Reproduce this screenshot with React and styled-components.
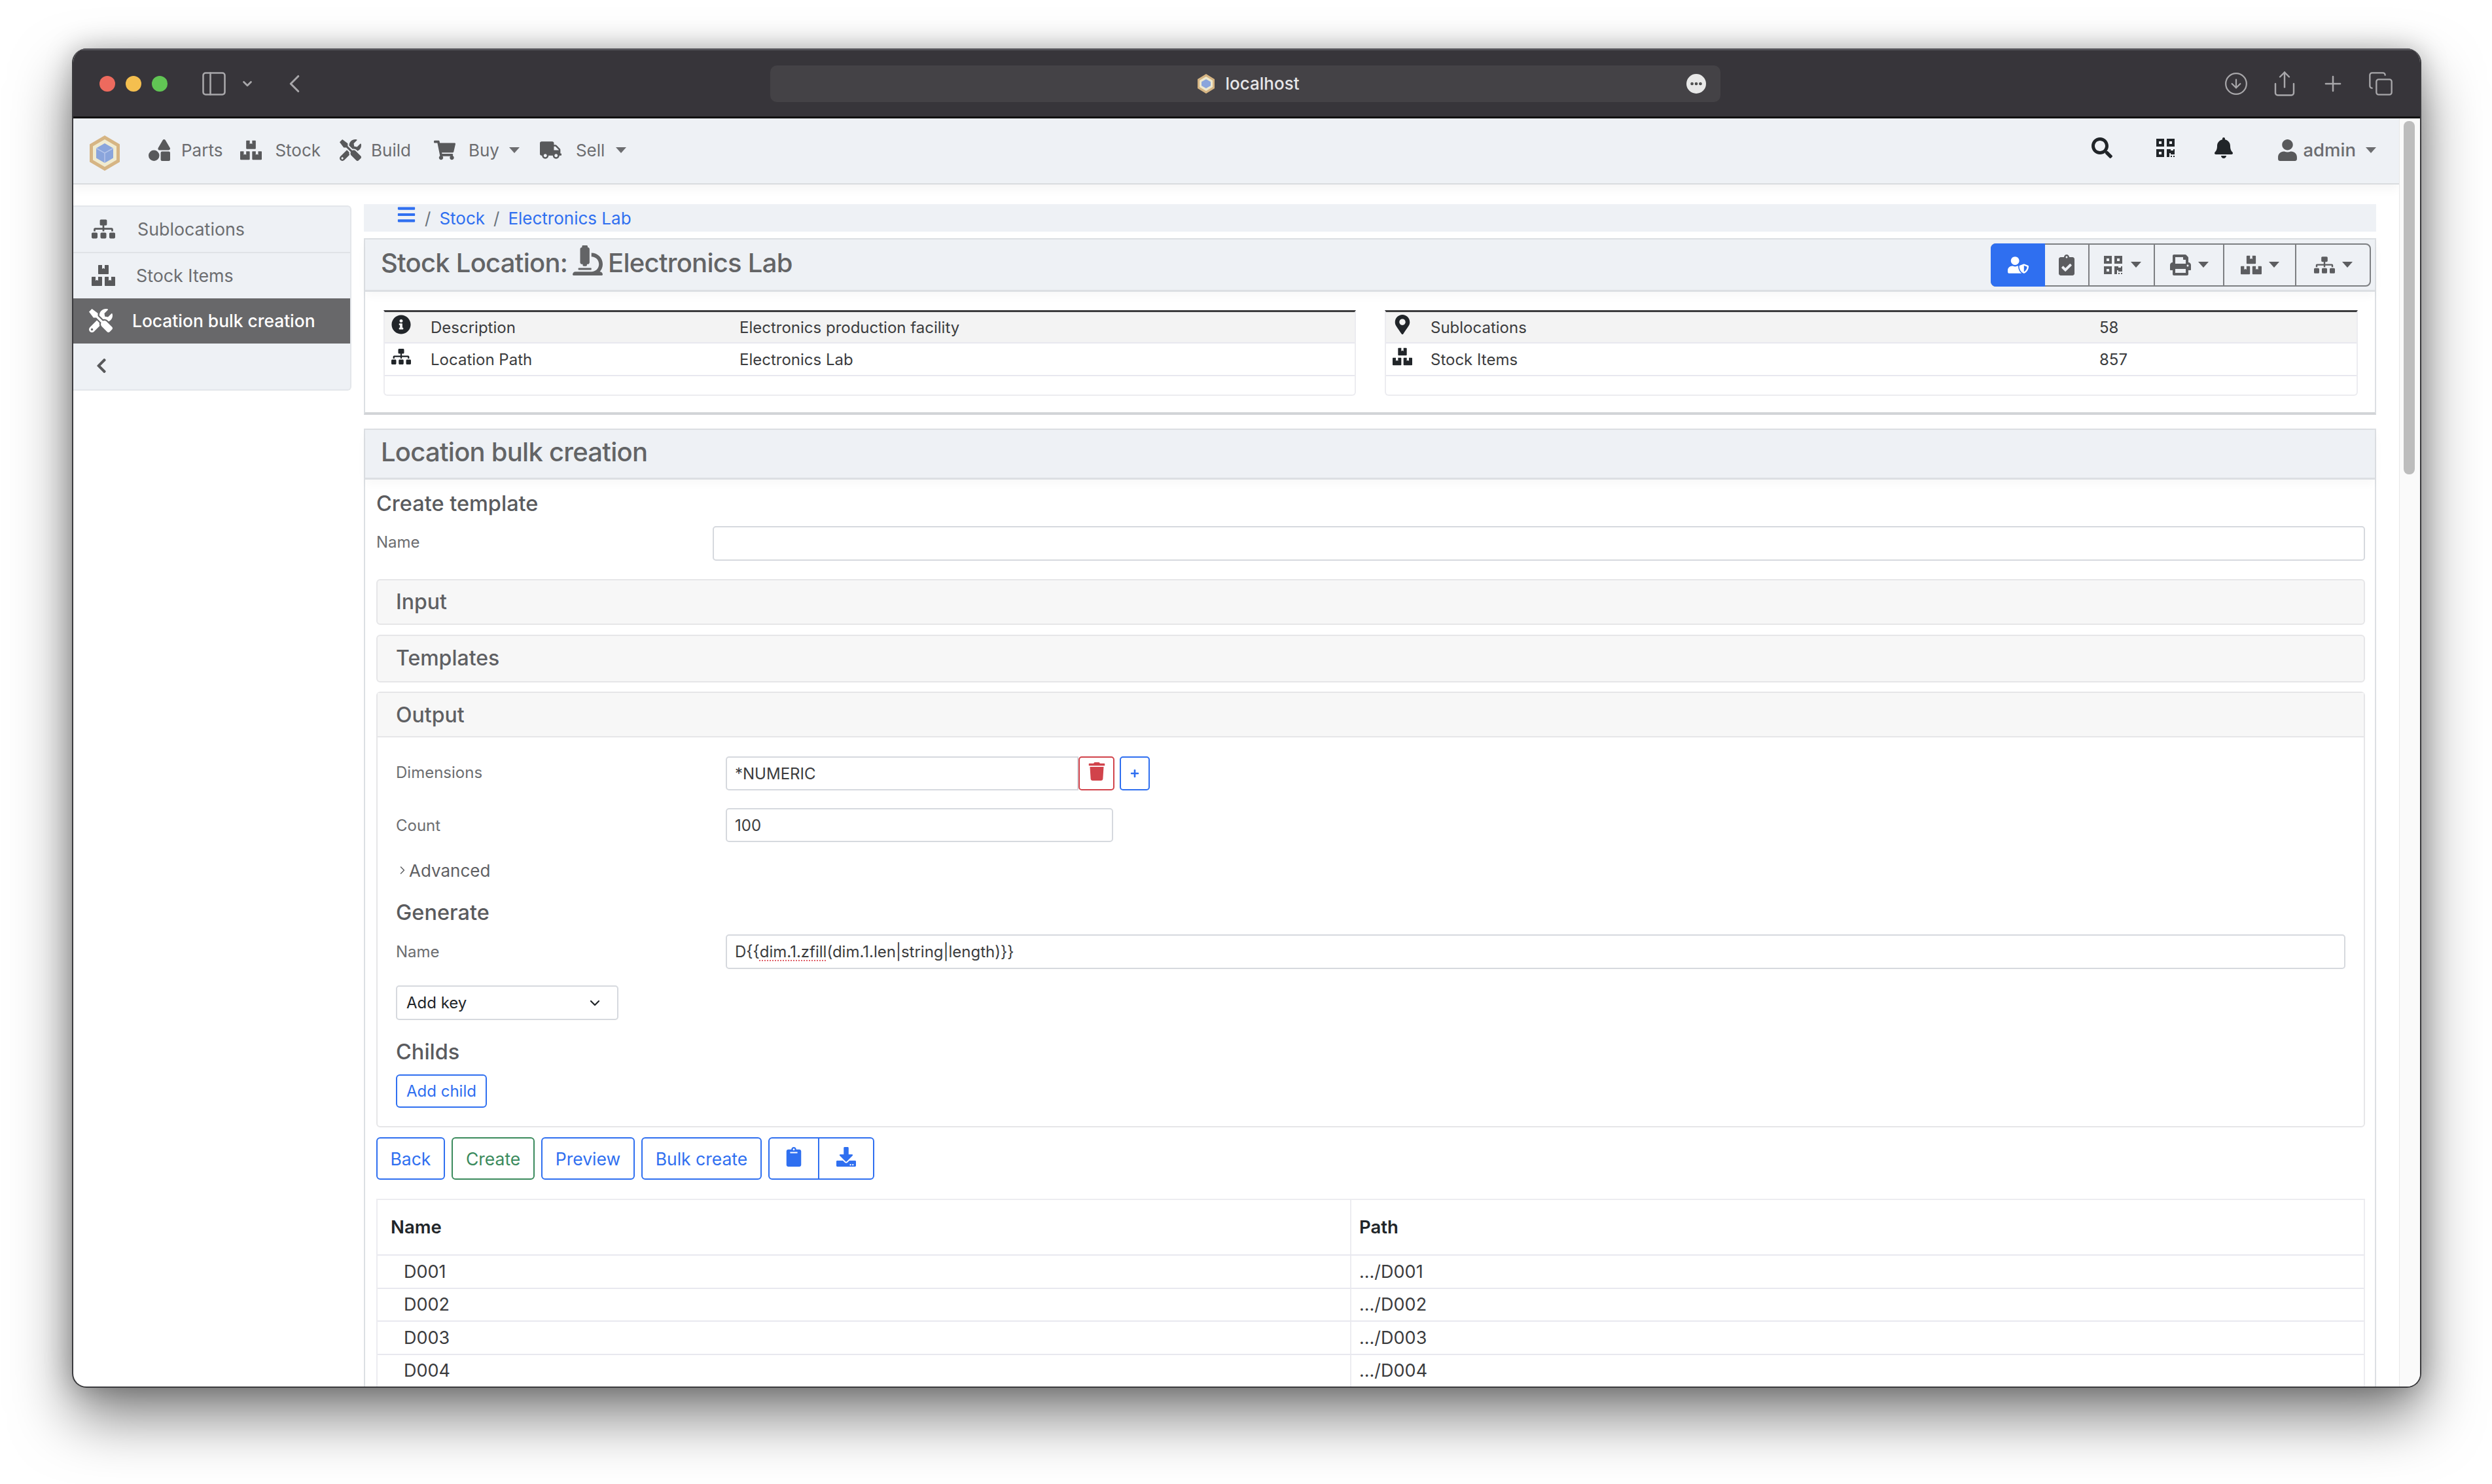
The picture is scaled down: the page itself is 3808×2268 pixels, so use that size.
import React from 'react';
import styled, { createGlobalStyle } from 'styled-components';
import {
  FaShapes, FaBoxes, FaTools, FaShoppingCart, FaTruck, FaSitemap, FaSearch, FaQrcode, FaBell, FaUser,
  FaUserShield, FaClipboardCheck, FaPrint, FaInfoCircle, FaMicroscope, FaBars, FaTrash, FaPlus,
  FaChevronLeft, FaClipboard, FaDownload, FaMapMarkerAlt,
} from 'react-icons/fa';
import { PanelLeft, ChevronDown, ChevronLeft, CircleArrowDown, Share, Plus, Copy, Ellipsis } from 'lucide-react';

const GlobalStyle = createGlobalStyle`
  html, body {
    margin: 0;
    padding: 0;
    background: #fff;
  }
  body {
    width: 3808px;
    height: 2268px;
    overflow: hidden;
    font-family: Inter, "Liberation Sans", sans-serif;
    color: #212529;
  }
  * { box-sizing: border-box; }
`;

const Desktop = styled.div`
  padding: 74px 108px 0 110px;
`;

const Window = styled.div`
  height: 2047px;
  border-radius: 22px;
  overflow: hidden;
  background: #fff;
  border: 2px solid #3a3a3d;
  border-width: 0 2px 2px 2px;
  box-shadow: 0 44px 90px rgba(0, 0, 0, 0.5), 0 0 40px rgba(0, 0, 0, 0.25);
  display: flex;
  flex-direction: column;
`;

const TitleBar = styled.div`
  height: 107px;
  flex: none;
  background: #37353a;
  border-top: 3px solid #55545a;
  border-bottom: 3px solid #111;
  display: flex;
  align-items: center;
  padding: 0 40px 0 40px;
  color: #a8a7aa;
`;

const Light = styled.span`
  width: 24px;
  height: 24px;
  border-radius: 50%;
  background: ${(p) => p.$color};
  margin-right: 16px;
  flex: none;
`;

const LeftTools = styled.div`
  display: flex;
  align-items: center;
  width: 1025px;
  flex: none;
`;

const SidebarToggle = styled(PanelLeft)`
  margin-left: 33px;
`;

const ChevronSmall = styled(ChevronDown)`
  margin: 0 38px 0 18px;
`;

const UrlBar = styled.div`
  width: 1452px;
  height: 56px;
  flex: none;
  background: #444246;
  border-radius: 10px;
  display: flex;
  align-items: center;
  justify-content: center;
  position: relative;
  color: #e6e6e8;
  font-size: 26px;
  gap: 16px;
  font-weight: 500;
  padding-left: 10px;
`;

const UrlMenu = styled.span`
  position: absolute;
  right: 22px;
  top: 13px;
  width: 30px;
  height: 30px;
  border-radius: 50%;
  background: #e8e8e8;
  color: #444;
  display: flex;
  align-items: center;
  justify-content: center;
`;

const RightTools = styled.div`
  margin-left: auto;
  display: flex;
  align-items: center;
  gap: 34px;
`;

const Viewport = styled.div`
  flex: 1;
  min-height: 0;
  display: flex;
`;

const PageArea = styled.div`
  flex: 1;
  min-width: 0;
  overflow: hidden;
`;

const ScrollTrack = styled.div`
  width: 32px;
  flex: none;
  background: #fafafa;
  border-left: 1px solid #e8e8e8;
  padding: 4px 8px 0 6px;
`;

const ScrollThumb = styled.div`
  height: 540px;
  border-radius: 8px;
  background: #bdbdbd;
`;

const Navbar = styled.div`
  height: 101px;
  background: #eef1f5;
  border-bottom: 2px solid #d9dcdf;
  display: flex;
  align-items: center;
  padding: 0 35px 3px 25px;
  box-shadow: 0 8px 14px rgba(0, 0, 0, 0.04);
`;

const Logo = styled.svg`
  width: 46px;
  height: 54px;
  margin: 10px 44px 0 0;
  flex: none;
`;

const NavItem = styled.div`
  display: flex;
  align-items: center;
  font-size: 26px;
  color: #6c6d70;
  margin-right: ${(p) => p.$mr || 27}px;
  gap: ${(p) => p.$gap || 18}px;
  svg { font-size: 33px; color: #58595b; }
`;

const AdminItem = styled(NavItem)`
  margin-right: 0;
  gap: 7px;
  font-size: 27.5px;
  font-weight: 500;
`;

const Caret = styled.span`
  width: 0;
  height: 0;
  margin-left: ${(p) => p.$gap || 0}px;
  border-left: 8px solid transparent;
  border-right: 8px solid transparent;
  border-top: 9px solid ${(p) => p.$color || '#6c6d70'};
  flex: none;
`;

const NavRight = styled.div`
  margin-left: auto;
  display: flex;
  align-items: center;
  color: #212529;
`;

const NavIcon = styled.span`
  display: flex;
  font-size: 32px;
  margin-right: ${(p) => p.$mr}px;
  margin-top: -6px;
`;

const Columns = styled.div`
  display: flex;
  padding: 30px 35px 0 0;
  gap: 19px;
`;

const Sidebar = styled.div`
  width: 425px;
  height: 283px;
  margin-top: 2px;
  flex: none;
  background: #eef1f5;
  border: 2px solid #e3e6ea;
  border-left: 0;
  border-radius: 0 6px 6px 0;
`;

const SideRow = styled.div`
  height: ${(p) => p.$h || 69}px;
  display: flex;
  align-items: center;
  font-size: ${(p) => (p.$active ? 26.4 : 26.8)}px;
  font-weight: ${(p) => (p.$active ? 500 : 400)};
  padding: 0 0 2px ${(p) => p.$pad || 24}px;
  color: ${(p) => (p.$active ? '#fff' : '#6c6d70')};
  background: ${(p) => (p.$active ? '#68686a' : 'transparent')};
  border-bottom: ${(p) => (p.$line ? '2px solid #dfe2e6' : '0')};
  svg {
    font-size: 36px;
    color: ${(p) => (p.$active ? '#fff' : '#58595b')};
    margin-right: ${(p) => p.$gap || 32}px;
  }
`;

const CollapseIcon = styled(FaChevronLeft)`
  && { font-size: 26px; }
  margin-left: 6px;
`;

const Main = styled.div`
  flex: 1;
  min-width: 0;
  display: flex;
  flex-direction: column;
`;

const Breadcrumb = styled.div`
  height: 42px;
  background: #eef1f5;
  display: flex;
  align-items: center;
  padding-left: 50px;
  font-size: 26px;
  gap: 13px;
  color: #6c757d;
  svg { font-size: 30px; margin-top: -6px; }
`;

const Crumb = styled.span`
  color: #2f6ff0;
`;

const Panel = styled.div`
  margin-top: ${(p) => p.$top}px;
  border: 2px solid #dcdfe3;
  border-bottom: 4px solid #d2d4d7;
  background: #fff;
  width: 100%;
`;

const PanelHead = styled.div`
  height: ${(p) => p.$h}px;
  display: flex;
  align-items: center;
  justify-content: space-between;
  padding: 0 6px 6px 24px;
  background: #eef1f5;
  border-bottom: 3px solid #dcdfe3;
  font-size: 40px;
  font-weight: 500;
  letter-spacing: -0.75px;
  color: #636466;
  box-shadow: 0 6px 14px rgba(0, 0, 0, 0.03);
`;

const TitleLeft = styled.div`
  display: flex;
  align-items: center;
  gap: 8px;
  svg { font-size: 46px; margin-top: -8px; color: #636466; }
`;

const ToolGroup = styled.div`
  display: flex;
  height: 66px;
  margin-bottom: -6px;
  border: 2px solid #7d7f82;
  border-radius: 8px;
  position: relative;
`;

const ToolButton = styled.div`
  display: flex;
  align-items: center;
  justify-content: center;
  gap: 11px;
  width: ${(p) => p.$w}px;
  margin: ${(p) => (p.$primary ? '-2px 0 -2px -2px' : '0')};
  background: ${(p) => (p.$primary ? '#2f6ff0' : 'transparent')};
  border-radius: ${(p) => (p.$primary ? '8px 0 0 8px' : '0')};
  border-right: ${(p) => (p.$last || p.$primary ? '0' : '2px solid #7d7f82')};
  color: ${(p) => (p.$primary ? '#fff' : '#5c5d60')};
  svg { font-size: 32px; }
`;

const InfoBody = styled.div`
  display: grid;
  grid-template-columns: 1486px 1487px;
  column-gap: 44px;
  padding: 28px 0 25px 28px;
`;

const InfoTable = styled.div`
  border: 2px solid #ececf0;
  border-top: 3px solid #3c3c3e;
  border-radius: 0 0 6px 6px;
  height: 131px;
  font-size: 24px;
  color: #3b3c3e;
`;

const InfoRow = styled.div`
  height: ${(p) => (p.$shade ? 48 : 50)}px;
  display: flex;
  align-items: center;
  border-bottom: 2px solid #e8e8ef;
  background: ${(p) => (p.$shade ? '#f3f3f3' : '#fff')};
  padding-left: 10px;
  svg { font-size: 30px; color: #212529; margin-top: -8px; flex: none; }
`;

const IconSlot = styled.span`
  width: ${(p) => p.$w || 60}px;
  flex: none;
  display: flex;
`;

const InfoLabel = styled.span`
  width: ${(p) => p.$w}px;
  flex: none;
`;

const PanelBody = styled.div`
  padding: 17px 15px 0 17px;
`;

const Section = styled.div`
  font-size: 32.5px;
  line-height: 40px;
  font-weight: 500;
  color: #5a5b5e;
  margin-top: ${(p) => p.$mt || 0}px;
  margin-bottom: ${(p) => p.$mb || 0}px;
`;

const FieldRow = styled.div`
  display: flex;
  align-items: center;
  margin-bottom: ${(p) => p.$mb || 0}px;
`;

const FieldLabel = styled.label`
  width: ${(p) => p.$w}px;
  flex: none;
  font-size: 24px;
  color: #6c6d70;
  margin-top: ${(p) => p.$up || 0}px;
`;

const TextBox = styled.div`
  flex: ${(p) => (p.$w ? 'none' : 1)};
  width: ${(p) => (p.$w ? `${p.$w}px` : 'auto')};
  height: ${(p) => p.$h || 52}px;
  border: 2px solid #d6d9de;
  border-radius: ${(p) => (p.$joined ? '5px 0 0 5px' : '5px')};
  background: #fff;
  display: flex;
  align-items: center;
  padding-left: 12px;
  font-size: 24px;
  color: #3b3c3e;
`;

const Misspelled = styled.span`
  text-decoration: underline dotted #e0616a 2px;
  text-underline-offset: 4px;
`;

const AccHead = styled.div`
  height: ${(p) => p.$h}px;
  background: #f7f7f7;
  border: 2px solid #e6e6e8;
  border-radius: 6px;
  margin-bottom: ${(p) => p.$mb}px;
  display: flex;
  align-items: center;
  padding: 0 0 2px 28px;
  font-size: 32px;
  font-weight: 500;
  color: #5f6063;
`;

const OutputCard = styled.div`
  border: 2px solid #e6e6e8;
  border-radius: 6px;
  height: 666px;
`;

const OutputHead = styled.div`
  height: 68px;
  background: #f7f7f7;
  border-bottom: 2px solid #e6e6e8;
  display: flex;
  align-items: center;
  padding-left: 28px;
  font-size: 32px;
  font-weight: 500;
  color: #5f6063;
`;

const OutputBody = styled.div`
  padding: 29px 28px 0 28px;
`;

const SquareButton = styled.div`
  height: 52px;
  width: ${(p) => p.$w}px;
  margin-left: ${(p) => p.$ml || 0}px;
  flex: none;
  border: 2px solid ${(p) => p.$color};
  border-radius: 5px;
  color: ${(p) => p.$color};
  display: flex;
  align-items: center;
  justify-content: center;
  svg { font-size: ${(p) => p.$icon}px; margin-top: ${(p) => p.$lift || 0}px; }
`;

const AdvancedRow = styled.div`
  display: flex;
  align-items: center;
  margin-top: 25px;
  height: 36px;
  font-size: 26px;
  color: #5f6063;
`;

const AdvancedArrow = styled(ChevronLeft)`
  transform: rotate(180deg);
`;

const Select = styled.div`
  width: 340px;
  height: 53px;
  margin: 25px 0 29px 0;
  border: 2px solid #d6d9de;
  border-radius: 5px;
  display: flex;
  align-items: center;
  justify-content: space-between;
  padding: 0 22px 0 14px;
  font-size: 24px;
  color: #212529;
`;

const OutlineButton = styled.div`
  height: ${(p) => p.$h || 65}px;
  padding: 0 ${(p) => p.$pad || 19.5}px;
  display: inline-flex;
  align-items: center;
  justify-content: center;
  border: 2px solid ${(p) => p.$color || '#2f6ff0'};
  border-radius: 6px;
  color: ${(p) => p.$color || '#2f6ff0'};
  font-size: ${(p) => p.$size || 26.5}px;
`;

const ButtonRow = styled.div`
  display: flex;
  gap: 10.5px;
  margin: 15px 0 29px 0;
`;

const IconGroup = styled.div`
  display: flex;
  height: 65px;
  border: 2px solid #2f6ff0;
  border-radius: 6px;
  color: #2f6ff0;
`;

const IconCell = styled.div`
  width: ${(p) => p.$w}px;
  display: flex;
  align-items: center;
  justify-content: center;
  border-right: ${(p) => (p.$line ? '2px solid #2f6ff0' : '0')};
  svg { font-size: 30px; margin-top: -6px; }
`;

const ResultTable = styled.div`
  border: 2px solid #ececf0;
`;

const ResultRow = styled.div`
  display: grid;
  grid-template-columns: 1486px 1fr;
  height: ${(p) => p.$h || 50.5}px;
  border-bottom: 2px solid #e8e8ef;
  align-items: center;
  font-size: ${(p) => (p.$head ? 27.5 : 27)}px;
  font-weight: ${(p) => (p.$head ? 600 : 400)};
  color: ${(p) => (p.$head ? '#212529' : '#3b3c3e')};
`;

const ResultCell = styled.div`
  height: 100%;
  display: flex;
  align-items: center;
  padding: 0 0 ${(p) => (p.$lift ? 2 : 0)}px ${(p) => p.$pad}px;
  border-left: ${(p) => (p.$split ? '2px solid #ececf0' : '0')};
`;

const rows = ['D001', 'D002', 'D003', 'D004'];

const App = () => (
  <>
    <GlobalStyle />
    <Desktop>
      <Window>
        <TitleBar>
          <LeftTools>
            <Light $color="#ed6a5e" />
            <Light $color="#f4bf4f" />
            <Light $color="#61c554" />
            <SidebarToggle size={44} strokeWidth={1.4} />
            <ChevronSmall size={22} strokeWidth={3} />
            <ChevronLeft size={46} strokeWidth={1.6} />
          </LeftTools>
          <UrlBar>
            <svg width="26" height="30" viewBox="0 0 26 30">
              <path d="M13 0 26 8v14l-13 8-13-8V8z" fill="#d6b584" />
              <path d="M13 4 23 10v10l-10 6-10-6V10z" fill="#eee8cc" />
              <path d="M13 8 20 12v6l-7 4-7-4v-6z" fill="#8aa5dc" />
            </svg>
            localhost
            <UrlMenu>
              <Ellipsis size={22} strokeWidth={3} />
            </UrlMenu>
          </UrlBar>
          <RightTools>
            <CircleArrowDown size={38} strokeWidth={1.4} />
            <Share size={42} strokeWidth={1.4} />
            <Plus size={38} strokeWidth={1.6} />
            <Copy size={40} strokeWidth={1.4} />
          </RightTools>
        </TitleBar>
        <Viewport>
          <PageArea>
            <Navbar>
              <Logo viewBox="0 0 46 54">
                <path d="M23 0 46 13.500v27L23 54 0 40.500v-27z" fill="#d6b584" />
                <path d="M23 6 41 16.500v21L23 48 5 37.500v-21z" fill="#f0ebd0" />
                <path d="M23 12 36 19.500v15L23 42 10 34.500v-15z" fill="#8aa5dc" />
                <path d="M10 19.500 23 27l13-7.500M23 27v15" stroke="#b4c5ea" strokeWidth="1.500" fill="none" />
              </Logo>
              <NavItem $gap={17}><FaShapes />Parts</NavItem>
              <NavItem $gap={20} $mr={29}><FaBoxes />Stock</NavItem>
              <NavItem $gap={15} $mr={35}><FaTools />Build</NavItem>
              <NavItem $mr={31} $gap={20}><FaShoppingCart />Buy<Caret $gap={-5} /></NavItem>
              <NavItem $gap={22}><FaTruck />Sell<Caret $gap={-5} /></NavItem>
              <NavRight>
                <NavIcon $mr={65}><FaSearch /></NavIcon>
                <NavIcon $mr={57}><FaQrcode /></NavIcon>
                <NavIcon $mr={65}><FaBell /></NavIcon>
                <AdminItem><FaUser />admin<Caret $gap={8} /></AdminItem>
              </NavRight>
            </Navbar>
            <Columns>
              <Sidebar>
                <SideRow $h={71} $line $gap={34} $pad={28}><FaSitemap />Sublocations</SideRow>
                <SideRow $h={69} $gap={32} $pad={28}><FaBoxes />Stock Items</SideRow>
                <SideRow $h={69} $active $gap={30}><FaTools />Location bulk creation</SideRow>
                <SideRow $h={69}><CollapseIcon /></SideRow>
              </Sidebar>
              <Main>
                <Breadcrumb>
                  <Crumb><FaBars /></Crumb>
                  /
                  <Crumb>Stock</Crumb>
                  /
                  <Crumb>Electronics Lab</Crumb>
                </Breadcrumb>
                <Panel $top={10}>
                  <PanelHead $h={80}>
                    <TitleLeft>Stock Location: <FaMicroscope />Electronics Lab</TitleLeft>
                    <ToolGroup>
                      <ToolButton $primary $w={83}><FaUserShield /></ToolButton>
                      <ToolButton $w={68}><FaClipboardCheck /></ToolButton>
                      <ToolButton $w={100}><FaQrcode /><Caret $color="#5c5d60" /></ToolButton>
                      <ToolButton $w={106}><FaPrint /><Caret $color="#5c5d60" /></ToolButton>
                      <ToolButton $w={110}><FaBoxes /><Caret $color="#5c5d60" /></ToolButton>
                      <ToolButton $w={112} $last><FaSitemap /><Caret $color="#5c5d60" /></ToolButton>
                    </ToolGroup>
                  </PanelHead>
                  <InfoBody>
                    <InfoTable>
                      <InfoRow $shade>
                        <IconSlot><FaInfoCircle /></IconSlot>
                        <InfoLabel $w={472}>Description</InfoLabel>
                        Electronics production facility
                      </InfoRow>
                      <InfoRow>
                        <IconSlot><FaSitemap /></IconSlot>
                        <InfoLabel $w={472}>Location Path</InfoLabel>
                        Electronics Lab
                      </InfoRow>
                    </InfoTable>
                    <InfoTable>
                      <InfoRow $shade>
                        <IconSlot $w={58}><FaMapMarkerAlt /></IconSlot>
                        <InfoLabel $w={1022}>Sublocations</InfoLabel>
                        58
                      </InfoRow>
                      <InfoRow>
                        <IconSlot $w={58}><FaBoxes /></IconSlot>
                        <InfoLabel $w={1022}>Stock Items</InfoLabel>
                        857
                      </InfoRow>
                    </InfoTable>
                  </InfoBody>
                </Panel>
                <Panel $top={21}>
                  <PanelHead $h={76}>Location bulk creation</PanelHead>
                  <PanelBody>
                    <Section $mb={14}>Create template</Section>
                    <FieldRow $mb={28}>
                      <FieldLabel $w={514} $up={-4}>Name</FieldLabel>
                      <TextBox $h={53} />
                    </FieldRow>
                    <AccHead $h={70} $mb={15}>Input</AccHead>
                    <AccHead $h={73} $mb={14}>Templates</AccHead>
                    <OutputCard>
                      <OutputHead>Output</OutputHead>
                      <OutputBody>
                        <FieldRow $mb={27}>
                          <FieldLabel $w={504} $up={-3}>Dimensions</FieldLabel>
                          <TextBox $w={539} $joined>*NUMERIC</TextBox>
                          <SquareButton $w={55} $color="#d1434b" $icon={28} $lift={-6}><FaTrash /></SquareButton>
                          <SquareButton $w={46} $ml={8} $color="#2f6ff0" $icon={14}><FaPlus /></SquareButton>
                        </FieldRow>
                        <FieldRow>
                          <FieldLabel $w={504}>Count</FieldLabel>
                          <TextBox $w={592}>100</TextBox>
                        </FieldRow>
                        <AdvancedRow>
                          <AdvancedArrow size={20} strokeWidth={1.8} />
                          Advanced
                        </AdvancedRow>
                        <Section $mt={27} $mb={13}>Generate</Section>
                        <FieldRow>
                          <FieldLabel $w={504}>Name</FieldLabel>
                          <TextBox $h={53}>
                            D{'{{'}<Misspelled>dim.1.zfill</Misspelled>(dim.1.len|string|length){'}}'}
                          </TextBox>
                        </FieldRow>
                        <Select>
                          Add key
                          <ChevronDown size={24} strokeWidth={2.2} />
                        </Select>
                        <Section $mb={14}>Childs</Section>
                        <OutlineButton $h={51} $pad={14} $size={24}>Add child</OutlineButton>
                      </OutputBody>
                    </OutputCard>
                    <ButtonRow>
                      <OutlineButton>Back</OutlineButton>
                      <OutlineButton $color="#3a8a5c">Create</OutlineButton>
                      <OutlineButton>Preview</OutlineButton>
                      <OutlineButton>Bulk create</OutlineButton>
                      <IconGroup>
                        <IconCell $w={76} $line><FaClipboard /></IconCell>
                        <IconCell $w={82}><FaDownload /></IconCell>
                      </IconGroup>
                    </ButtonRow>
                    <ResultTable>
                      <ResultRow $head $h={85}>
                        <ResultCell $pad={20} $lift>Name</ResultCell>
                        <ResultCell $pad={12} $split $lift>Path</ResultCell>
                      </ResultRow>
                      {rows.map((name) => (
                        <ResultRow key={name}>
                          <ResultCell $pad={40}>{name}</ResultCell>
                          <ResultCell $pad={12} $split>.../{name}</ResultCell>
                        </ResultRow>
                      ))}
                    </ResultTable>
                  </PanelBody>
                </Panel>
              </Main>
            </Columns>
          </PageArea>
          <ScrollTrack>
            <ScrollThumb />
          </ScrollTrack>
        </Viewport>
      </Window>
    </Desktop>
  </>
);

export default App;
